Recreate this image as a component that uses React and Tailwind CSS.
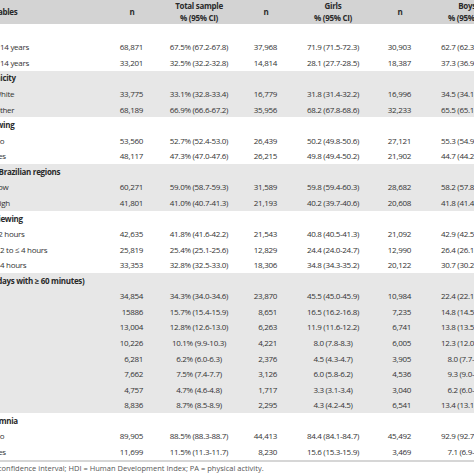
import React from "react";

const groups = [
  {
    label: "Age",
    shade: false,
    rows: [
      ["< 14 years", "68,871", "67.5% (67.2-67.8)", "37,968", "71.9 (71.5-72.3)", "30,903", "62.7 (62.3-63.1)"],
      ["≥ 14 years", "33,201", "32.5% (32.2-32.8)", "14,814", "28.1 (27.7-28.5)", "18,387", "37.3 (36.9-37.7)"],
    ],
  },
  {
    label: "Ethnicity",
    shade: true,
    rows: [
      ["White", "33,775", "33.1% (32.8-33.4)", "16,779", "31.8 (31.4-32.2)", "16,996", "34.5 (34.1-34.9)"],
      ["Other", "68,189", "66.9% (66.6-67.2)", "35,956", "68.2 (67.8-68.6)", "32,233", "65.5 (65.1-65.9)"],
    ],
  },
  {
    label: "Drawing",
    shade: false,
    rows: [
      ["No", "53,560", "52.7% (52.4-53.0)", "26,439", "50.2 (49.8-50.6)", "27,121", "55.3 (54.9-55.8)"],
      ["Yes", "48,117", "47.3% (47.0-47.6)", "26,215", "49.8 (49.4-50.2)", "21,902", "44.7 (44.2-45.1)"],
    ],
  },
  {
    label: "HDI Brazilian regions",
    shade: true,
    rows: [
      ["Low", "60,271", "59.0% (58.7-59.3)", "31,589", "59.8 (59.4-60.3)", "28,682", "58.2 (57.8-58.6)"],
      ["High", "41,801", "41.0% (40.7-41.3)", "21,193", "40.2 (39.7-40.6)", "20,608", "41.8 (41.4-42.2)"],
    ],
  },
  {
    label: "TV viewing",
    shade: false,
    rows: [
      ["≤2 hours", "42,635", "41.8% (41.6-42.2)", "21,543", "40.8 (40.5-41.3)", "21,092", "42.9 (42.5-43.4)"],
      ["> 2 to ≤ 4 hours", "25,819", "25.4% (25.1-25.6)", "12,829", "24.4 (24.0-24.7)", "12,990", "26.4 (26.1-26.8)"],
      ["> 4 hours", "33,353", "32.8% (32.5-33.0)", "18,306", "34.8 (34.3-35.2)", "20,122", "30.7 (30.2-31.1)"],
    ],
  },
  {
    label: "PA (days with ≥ 60 minutes)",
    shade: true,
    rows: [
      ["0", "34,854", "34.3% (34.0-34.6)", "23,870", "45.5 (45.0-45.9)", "10,984", "22.4 (22.1-22.8)"],
      ["1", "15886", "15.7% (15.4-15.9)", "8,651", "16.5 (16.2-16.8)", "7,235", "14.8 (14.5-15.1)"],
      ["2", "13,004", "12.8% (12.6-13.0)", "6,263", "11.9 (11.6-12.2)", "6,741", "13.8 (13.5-14.1)"],
      ["3", "10,226", "10.1% (9.9-10.3)", "4,221", "8.0 (7.8-8.3)", "6,005", "12.3 (12.0-12.6)"],
      ["4", "6,281", "6.2% (6.0-6.3)", "2,376", "4.5 (4.3-4.7)", "3,905", "8.0 (7.7-8.3)"],
      ["5", "7,662", "7.5% (7.4-7.7)", "3,126", "6.0 (5.8-6.2)", "4,536", "9.3 (9.0-9.6)"],
      ["6", "4,757", "4.7% (4.6-4.8)", "1,717", "3.3 (3.1-3.4)", "3,040", "6.2 (6.0-6.4)"],
      ["7", "8,836", "8.7% (8.5-8.9)", "2,295", "4.3 (4.2-4.5)", "6,541", "13.4 (13.1-13.7)"],
    ],
  },
  {
    label: "Insomnia",
    shade: false,
    rows: [
      ["No", "89,905", "88.5% (88.3-88.7)", "44,413", "84.4 (84.1-84.7)", "45,492", "92.9 (92.7-93.1)"],
      ["Yes", "11,699", "11.5% (11.3-11.7)", "8,230", "15.6 (15.3-15.9)", "3,469", "7.1 (6.9-7.3)"],
    ],
  },
];

const cols = "grid grid-cols-[131px_36px_98px_36px_98px_36px_98px]";

const Row = ({ cells }) => (
  <div className={`${cols} h-[15.57px] items-center`}>
    <div className="pl-[11px] whitespace-nowrap">{cells[0]}</div>
    {cells.slice(1).map((c, i) =>
      i % 2 === 0 ? (
        <div key={i} className="text-right pr-[7px] whitespace-nowrap">
          {c}
        </div>
      ) : (
        <div key={i} className="text-center whitespace-nowrap">
          {c}
        </div>
      )
    )}
  </div>
);

export default function App() {
  return (
    <div
      className="w-[474px] h-[474px] overflow-hidden bg-white text-[#333333] text-[8px] tracking-[-0.3px]"
      style={{ fontFamily: '"Open Sans", "Liberation Sans", sans-serif' }}
    >
      <div className="w-[540px] ml-[-17px]">
        {/* Header */}
        <div className={`${cols} h-[24px] items-center bg-[#d3d3d3] font-bold text-[#2a2a2a] leading-[12px]`}>
          <div>Variables</div>
          <div className="text-center">n</div>
          <div className="text-center">
            Total sample
            <br />% (95% CI)
          </div>
          <div className="text-center">n</div>
          <div className="text-center">
            Girls
            <br />% (95% CI)
          </div>
          <div className="text-center">n</div>
          <div className="text-center">
            Boys
            <br />% (95% CI)
          </div>
        </div>

        {/* Body */}
        {groups.map((g) => (
          <div key={g.label} className={g.shade ? "bg-[#e7e7e7]" : "bg-white"}>
            <div className="h-[15.57px] flex items-center font-bold text-[#2a2a2a] whitespace-nowrap">
              {g.label}
            </div>
            {g.rows.map((r, i) => (
              <Row key={i} cells={r} />
            ))}
          </div>
        ))}

        {/* Footnote */}
        <div className="h-[2px] bg-[#d6d6d6]" />
        <div className="pt-[1px] text-[7.5px] leading-[10px] tracking-normal text-[#555555] whitespace-nowrap">
          CI = confidence interval; HDI = Human Development Index; PA = physical activity.
        </div>
      </div>
    </div>
  );
}
